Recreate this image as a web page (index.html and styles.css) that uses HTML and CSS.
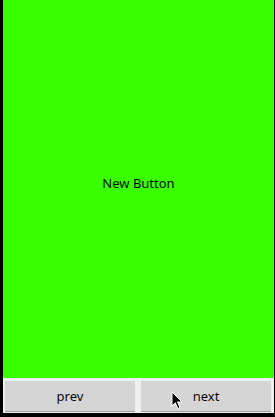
FILE: index.html
```html
<!DOCTYPE html>
<html lang="en">
<head>
    <meta charset="UTF-8">
    <meta name="viewport" content="width=device-width, initial-scale=1.0">
    <title>Buttons</title>
    <link rel="stylesheet" href="styles.css">
</head>
<body>
    <div class="screen">
        <div class="main-btn">New Button</div>
        <div class="nav-bar">
            <div class="nav-btn">prev</div>
            <div class="nav-btn">next</div>
        </div>
        <svg class="cursor" width="13" height="19" viewBox="0 0 13 19">
            <path d="M1 1 L1 15 L4.3 11.8 L6.8 17.6 L9 16.6 L6.5 11 L11 11 Z" fill="#000" stroke="#fff" stroke-width="1" stroke-linejoin="round"/>
        </svg>
    </div>
</body>
</html>
```

FILE: styles.css
```css
body {
    margin: 0;
    background-color: #000;
    font-family: "Noto Sans", Roboto, sans-serif;
}
.screen {
    width: 271px;
    height: 413px;
    padding: 0 1px 4px 3px;
    display: flex;
    flex-direction: column;
    position: relative;
}
.main-btn {
    flex: 1;
    background-color: #3aff00;
    color: #0a0a0a;
    font-size: 13px;
    display: flex;
    justify-content: center;
    align-items: center;
    padding-bottom: 12px;
}
.nav-bar {
    height: 31px;
    padding: 3px 3px 1px 2px;
    background-color: #efefef;
    display: flex;
    gap: 6px;
}
.nav-btn {
    flex: 1;
    background-color: #d5d5d5;
    border-bottom: 1px solid #9c9c9c;
    color: #0a0a0a;
    font-size: 13px;
    display: flex;
    justify-content: center;
    align-items: center;
}
.cursor {
    position: absolute;
    left: 171px;
    top: 391px;
}
```
